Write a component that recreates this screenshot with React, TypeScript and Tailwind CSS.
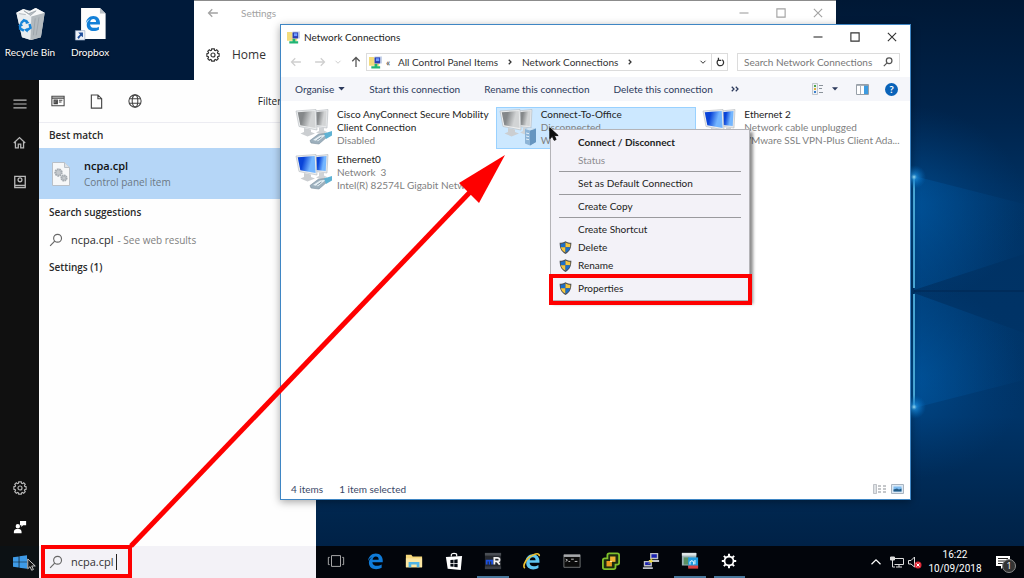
import type { ReactNode } from "react";
import clsx from "clsx";

type IconProps = { className?: string };

/* ---------- line icons ---------- */

function Stroke({ className, children, width = 1 }: IconProps & { children: ReactNode; width?: number }) {
  return (
    <svg
      viewBox="0 0 16 16"
      className={clsx("shrink-0", className)}
      fill="none"
      stroke="currentColor"
      strokeWidth={width}
      aria-hidden
    >
      {children}
    </svg>
  );
}

const MenuIcon = ({ className }: IconProps) => (
  <Stroke className={className} width={1.3}>
    <path d="M.5 3.500h15M.5 8h15M.5 12.500h15" />
  </Stroke>
);

const HomeIcon = ({ className }: IconProps) => (
  <Stroke className={className} width={1.6}>
    <path d="M1 8.500 8 2l7 6.500M3 7.500V14.500h3.500V10h3v4.500H13V7.500" />
  </Stroke>
);

const NotebookIcon = ({ className }: IconProps) => (
  <Stroke className={className} width={1.5}>
    <path d="M2 1.500h12v13H2zM2 12h12" />
    <circle cx="8" cy="5.500" r="2.200" />
  </Stroke>
);

const GearIcon = ({ className }: IconProps) => (
  <Stroke className={className} width={1.3}>
    <circle cx="8" cy="8" r="2.300" />
    <path d="M6.500 1h3l.3 1.600 1 .4L12.200 2 14 3.800l-.9 1.400.4 1 1.500.3v3l-1.500.3-.4 1 .9 1.400-1.800 1.800-1.400-.9-1 .4-.3 1.500h-3l-.3-1.500-1-.4-1.400.9L2 12.200l.9-1.400-.4-1L1 9.500v-3l1.500-.3.4-1L2 3.800 3.800 2l1.400 1 1-.4z" />
  </Stroke>
);

const SearchIcon = ({ className, width = 1.3 }: IconProps & { width?: number }) => (
  <Stroke className={className} width={width}>
    <circle cx="9.800" cy="6" r="4.500" />
    <path d="M6.500 9.300 1.300 14.700" />
  </Stroke>
);

const AppsIcon = ({ className }: IconProps) => (
  <Stroke className={className} width={1.2}>
    <path d="M1 2.500h14v11H1zM1 4.700h14M3.500 7h3.800v4H3.500zM9 7.200h4M9 9.200h3" />
    <circle cx="5.400" cy="9" r="1" />
  </Stroke>
);

const DocIcon = ({ className }: IconProps) => (
  <Stroke className={className} width={1.2}>
    <path d="M2.500 1h7l4 4v10h-11zM9.500 1v4h4" />
  </Stroke>
);

const GlobeIcon = ({ className }: IconProps) => (
  <Stroke className={className} width={1.200}>
    <circle cx="8" cy="8" r="7" />
    <ellipse cx="8" cy="8" rx="3.200" ry="7" />
    <path d="M1.500 5.500h13M1.500 10.500h13" />
  </Stroke>
);

const ArrowLeft = ({ className }: IconProps) => (
  <Stroke className={className} width={1.700}>
    <path d="M14.500 8H2M7 3 2 8l5 5" />
  </Stroke>
);

const ChevronDown = ({ className }: IconProps) => (
  <Stroke className={className} width={2}>
    <path d="m3 5.500 5 5 5-5" />
  </Stroke>
);

const ChevronRight = ({ className }: IconProps) => (
  <Stroke className={className} width={2.500}>
    <path d="m5.500 3.500 4.500 4.500-4.500 4.500" />
  </Stroke>
);

const RefreshIcon = ({ className }: IconProps) => (
  <Stroke className={className} width={2}>
    <path d="M11.500 4.500a5.200 5.200 0 1 1-6 .1M5.500 1v4.200H10" />
  </Stroke>
);

const Caret = ({ className }: IconProps) => (
  <svg viewBox="0 0 8 5" className={className} fill="currentColor" aria-hidden>
    <path d="M0 0h8L4 4.500z" />
  </svg>
);

const FeedbackIcon = ({ className }: IconProps) => (
  <svg viewBox="0 0 16 16" className={className} fill="currentColor" aria-hidden>
    <path d="M8 1h7v5h-3.500L9.500 8V6H8zM5.500 4.500a2.500 2.500 0 1 1 0 5 2.500 2.500 0 0 1 0-5zM1 15v-1.500C1 11 3 10 5.500 10s4.300 1 4.300 3.500V15z" />
  </svg>
);

const WindowsIcon = ({ className }: IconProps) => (
  <svg viewBox="0 0 16 16" className={className} fill="currentColor" aria-hidden>
    <path d="m0 2.500 6.500-.9v6H0zM7.300 1.500 16 .2v7.400H7.300zM0 8.400h6.500v6L0 13.500zM7.300 8.400H16v7.400l-8.700-1.300z" />
  </svg>
);

const Cursor = ({ className, fill, stroke }: IconProps & { fill: string; stroke: string }) => (
  <svg viewBox="0 0 12 18" className={className} aria-hidden>
    <path d="M1 1v13l3-2.800L6.200 16l2.300-1-2.200-4.700H11z" fill={fill} stroke={stroke} strokeWidth="1.200" />
  </svg>
);

/* ---------- colour icons ---------- */

function RecycleBin({ className }: IconProps) {
  return (
    <svg viewBox="0 0 32 36" className={className} aria-hidden>
      <path d="m1 6 7-4 8 2 6-3 9 5-4 26-10 3-10-3z" fill="#d5dadd" />
      <path d="m1 6 16 3-1 26-9-3z" fill="#e9edf0" />
      <path d="m17 9 14-3-4 26-11 3z" fill="#b3babf" />
      <path d="m1 6 8-4 5 3 7-4 10 5-14 4z" fill="#f7f8f9" />
      <path d="m9 4 5 3 8-3-6 5zM4 7l7 1M21 12l-2 18M25 11l-3 19" fill="#b6bec5" stroke="#959da3" strokeWidth=".7" />
      <g fill="none" stroke="#1684d8" strokeWidth="2.600">
        <path d="m6 17 3-3 4 2M15 18l1 4-4 3M9 25l-4-2v-4" />
      </g>
      <path d="m11 13 4 4-4 1zM13 22v5l-4-3zM3 20l3-4 2 4z" fill="#1684d8" />
    </svg>
  );
}

function EdgeMark() {
  return (
    <path d="M1 8.500C1.500 4 4.500.5 9 .5c4.700 0 7 3.500 7 7.300v1.700H5.500c.2 2.700 2.400 3.600 4.500 3.600 1.900 0 3.600-.5 4.900-1.300v3.300c-1.500.9-3.400 1.400-5.600 1.400-4.300 0-7.300-2.500-7.300-6.700 0-2.600 1.400-4.600 3.600-5.700C3.300 4.700 1.900 6.300 1 8.500zm4.700-1.700h6.200c0-2-1-3.200-2.900-3.200-1.800 0-3 1.300-3.300 3.200z" />
  );
}

function DropboxShortcut({ className }: IconProps) {
  return (
    <svg viewBox="0 0 34 36" className={className} aria-hidden>
      <path d="M7 1h20l6 6v27H7z" fill="#fdfdfd" />
      <path d="M27 1v6h6z" fill="#b9c0c6" />
      <g transform="translate(11 9)" fill="#1380d8">
        <EdgeMark />
      </g>
      <path d="M1 25h10v10H1z" fill="#eef2f8" stroke="#8aa0c0" strokeWidth=".6" />
      <path d="M4 27h5v5l-2-1.500L4.500 34 3 32l3-3z" fill="#1f4f9c" />
    </svg>
  );
}

function CplFile({ className }: IconProps) {
  return (
    <svg viewBox="0 0 18 24" className={className} aria-hidden>
      <path d="M.5.500h12l5 5v18H.5z" fill="#f6f7f8" stroke="#b9c0c8" />
      <path d="M12.500.500v5h5" fill="#dde1e5" stroke="#b9c0c8" />
      <g fill="#c4c8cc" stroke="#a4aab0">
        <circle cx="6.500" cy="10.500" r="3.200" strokeDasharray="1.600 .6" strokeWidth="2" />
        <circle cx="12" cy="16" r="2.600" strokeDasharray="1.500 .5" strokeWidth="2" />
      </g>
    </svg>
  );
}

function NetFolder({ className }: IconProps) {
  return (
    <svg viewBox="0 0 14 14" className={className} aria-hidden>
      <path d="M0 1h5l1 1h5v8.500H0z" fill="#f3dc7c" />
      <path d="M6 .5h8v7.500H6z" fill="#c7d3e8" />
      <path d="M6 1.500h6v6.500H6z" fill="#2a3fb4" />
      <path d="M7.500 2.500h3.500v3H7.500z" fill="#6f9bff" />
      <path d="M6 8.500h3V11h3v2.500H2.500V11H6z" fill="#21b573" />
    </svg>
  );
}

type Badge = "cable" | "server";

function ConnectionIcon({ active, badge, className }: IconProps & { active: boolean; badge: Badge }) {
  const from = active ? "#0a44d8" : "#85888a";
  const to = active ? "#74b6ff" : "#d2d4d5";
  const id = active ? "screen-on" : "screen-off";
  return (
    <svg viewBox="0 0 38 38" className={className} aria-hidden>
      <defs>
        <linearGradient id={id} x1="0" y1="0" x2="1" y2=".25">
          <stop offset=".35" stopColor={from} />
          <stop offset=".8" stopColor={to} />
        </linearGradient>
      </defs>
      <path d="m19 3 14-1.500L32 20l-12-1.500z" fill="#e6e8ea" stroke="#b4b9bd" strokeWidth=".6" />
      <path d="m20.500 4.200 11-1.200-.8 15-9.700-1z" fill={`url(#${id})`} />
      <path d="m24 19.500 5 .5v2.500l3 1.500-6 2.500-5-2 3-1.500z" fill="#d0d3d6" />
      <path d="m1 3 20-1.500L22 22 4 18.500z" fill="#eceeef" stroke="#b4b9bd" strokeWidth=".6" />
      <path d="m2.700 4.300 17-1.300.9 17L5.300 17.200z" fill={`url(#${id})`} />
      <path d="m9 20 7 1.500V24l4 1.500-7.500 3-7-3L9 24z" fill="#cbced1" />
      {badge === "cable" ? (
        <g>
          <path d="m15 32.500 8-6 9-1.500v4l-8 7-8-1z" fill="#9db0bd" stroke="#7b8f9d" strokeWidth=".6" />
          <path d="m18 32 7-4.500 6-.8-8 6.600z" fill="#e6eff4" />
          <path d="m21.500 32.500 5-3.500" stroke="#7f95a4" />
          <path d="m29 25.500 8-2.500v4.500L31 31z" fill="#5fb2d3" />
        </g>
      ) : (
        <g>
          <path d="m26 21 4-1.500 7 1V34l-6 3.500-5-2z" fill="#8db4d6" />
          <path d="m31 22.500 6-2V34l-6 3.500z" fill="#6595c0" />
          <path d="m26 21 4-1.500 7 1-6 2z" fill="#cfe3f3" />
          <path d="m27 25 3 .7M27 28l3 .7M27 31l3 .7" stroke="#e4f1fb" />
        </g>
      )}
    </svg>
  );
}

function Shield({ className }: IconProps) {
  return (
    <svg viewBox="0 0 14 14" className={className} aria-hidden>
      <path d="M7 .2c2 1.300 4 1.700 6.300 1.700C13.300 7.500 11.800 11.200 7 13.900 2.200 11.200.7 7.500.7 1.900 3 1.900 5 1.500 7 .2z" fill="#4a4f55" />
      <path d="M7 1.600v5.200H2C1.800 5.400 1.800 4.300 1.900 3 3.700 3 5.400 2.600 7 1.600z" fill="#1c6fc9" />
      <path d="M7 1.600v5.200h5c.2-1.400.2-2.500.1-3.800C10.300 3 8.600 2.600 7 1.600z" fill="#f6c63c" />
      <path d="M2 6.800h5v5.700C4 10.900 2.500 9.200 2 6.800z" fill="#f6c63c" />
      <path d="M12 6.800H7v5.700c3-1.600 4.500-3.300 5-5.700z" fill="#1c6fc9" />
    </svg>
  );
}

/* ---------- wallpaper ---------- */

function Wallpaper() {
  return (
    <svg className="absolute inset-0 h-full w-full" viewBox="0 0 1024 578" preserveAspectRatio="none" aria-hidden>
      <defs>
        <linearGradient id="sky" x1="0" y1="0" x2="0" y2="1">
          <stop offset="0" stopColor="#001835" />
          <stop offset=".2" stopColor="#00244c" />
          <stop offset=".35" stopColor="#003264" />
          <stop offset=".72" stopColor="#003468" />
          <stop offset=".9" stopColor="#00254c" />
          <stop offset="1" stopColor="#001d40" />
        </linearGradient>
        <radialGradient id="glow">
          <stop offset="0" stopColor="#0062b3" stopOpacity=".5" />
          <stop offset="1" stopColor="#004a90" stopOpacity="0" />
        </radialGradient>
        <radialGradient id="spark">
          <stop offset="0" stopColor="#a5e8ff" />
          <stop offset=".25" stopColor="#1e95e8" stopOpacity=".7" />
          <stop offset="1" stopColor="#0068bd" stopOpacity="0" />
        </radialGradient>
        <linearGradient id="beam" x1="0" x2="1">
          <stop offset="0" stopColor="#0060b0" stopOpacity=".35" />
          <stop offset="1" stopColor="#0060b0" stopOpacity=".03" />
        </linearGradient>
      </defs>
      <rect width="1024" height="578" fill="url(#sky)" />
      <path d="M0 0h194v80H0z" fill="#001a3a" />
      <ellipse cx="905" cy="205" rx="120" ry="100" fill="url(#glow)" />
      <ellipse cx="905" cy="380" rx="120" ry="100" fill="url(#glow)" />
      <path d="m914 176 110 28v50l-110 36z" fill="url(#beam)" />
      <path d="m914 293 110 40v47l-110 28z" fill="url(#beam)" />
      <path d="M914 290h110v2H914z" fill="#00244c" opacity=".4" />
      <path d="M913 176h2v112h-2zM913 294h2v114h-2z" fill="#4fb4e6" />
      <circle cx="914" cy="177" r="12" fill="url(#spark)" />
      <circle cx="914" cy="407" r="12" fill="url(#spark)" />
    </svg>
  );
}

function DesktopIcon({ label, children }: { label: string; children: ReactNode }) {
  return (
    <button className="flex w-15 flex-col items-center gap-[3px] font-['Lato',sans-serif] text-[10px] leading-4 whitespace-nowrap text-white [text-shadow:0_1px_2px_#000]">
      {children}
      {label}
    </button>
  );
}

/* ---------- windows ---------- */

function WindowButtons({ className }: IconProps) {
  return (
    <div className={clsx("flex items-center", className)}>
      <button aria-label="Minimise" className="flex w-[37px] justify-center">
        <Stroke className="size-3" width={1.500}><path d="M2 8h12" /></Stroke>
      </button>
      <button aria-label="Maximise" className="flex w-[37px] justify-center">
        <Stroke className="size-3" width={1.500}><path d="M2.500 2.500h11v11h-11z" /></Stroke>
      </button>
      <button aria-label="Close" className="flex w-[37px] justify-center">
        <Stroke className="size-3" width={1.500}><path d="m2.500 2.500 11 11M13.500 2.500l-11 11" /></Stroke>
      </button>
    </div>
  );
}

function SettingsWindow() {
  return (
    <section className="absolute top-0 right-[188px] left-[194px] h-[500px] border-t border-[#8c8c8c] bg-white">
      <div className="flex h-6 items-center text-[#a3a3a3]">
        <button aria-label="Back" className="ml-[13px]"><ArrowLeft className="size-3" /></button>
        <span className="ml-[22px] flex-1 font-['Lato',sans-serif] text-[10px]">Settings</span>
        <WindowButtons />
      </div>
      <button className="mt-5 ml-3 flex items-center gap-3 text-[12px] leading-5 text-[#333]">
        <GearIcon className="size-[14px]" />
        Home
      </button>
    </section>
  );
}

function StartPanel() {
  return (
    <section className="absolute top-20 bottom-0 left-0 flex w-[316px] bg-[#fefefe] text-[#2a2a2a]">
      <nav className="flex w-[39px] flex-col items-center bg-[#101010] pt-1 text-[#b8b8b8]">
        <button aria-label="Expand" className="h-[39px]"><MenuIcon className="size-[14px]" /></button>
        <button aria-label="Home" className="h-[39px]"><HomeIcon className="size-[13px]" /></button>
        <button aria-label="Notebook" className="h-[39px]"><NotebookIcon className="size-[14px]" /></button>
        <button aria-label="Settings" className="mt-auto h-[39px]"><GearIcon className="size-[14px]" /></button>
        <button aria-label="Feedback" className="h-[39px] text-white"><FeedbackIcon className="size-[14px]" /></button>
      </nav>
      <div className="min-w-0 flex-1">
        <div className="flex h-[43px] items-center gap-6 border-b border-[#ececf2] px-3 text-[#444]">
          <button aria-label="Apps"><AppsIcon className="size-[14px]" /></button>
          <button aria-label="Documents"><DocIcon className="size-[15px]" /></button>
          <button aria-label="Web"><GlobeIcon className="size-[14px]" /></button>
          <button className="ml-auto flex items-center gap-2 text-[10px] text-[#222]">
            Filters <ChevronDown className="size-[10px]" />
          </button>
        </div>
        <h2 className="px-[10px] text-[10px] leading-[25px] font-semibold">Best match</h2>
        <button className="flex h-[51px] w-full items-center gap-[14px] bg-[#b5d6f7] px-[13px] text-left">
          <CplFile className="h-6 w-[18px]" />
          <span>
            <span className="block text-[11px] leading-[17px] font-semibold text-[#111]">ncpa.cpl</span>
            <span className="block text-[10px] leading-[17px] text-[#6b7885]">Control panel item</span>
          </span>
        </button>
        <h2 className="px-[10px] text-[10px] leading-[27px] font-semibold">Search suggestions</h2>
        <button className="flex h-7 items-center px-[10px] text-[11px]">
          <SearchIcon className="size-[14px] text-[#666]" />
          <span className="ml-2">ncpa.cpl</span>
          <span className="ml-1 text-[10px] text-[#808080]">- See web results</span>
        </button>
        <h2 className="px-[10px] text-[10px] leading-[27px] font-semibold">Settings (1)</h2>
      </div>
    </section>
  );
}

type Connection = {
  name: string;
  lines: string[];
  active: boolean;
  badge: Badge;
  selected?: boolean;
};

const CONNECTIONS: Connection[] = [
  { name: "Cisco AnyConnect Secure Mobility Client Connection", lines: ["Disabled"], active: false, badge: "cable" },
  { name: "Connect-To-Office", lines: ["Disconnected", "W"], active: false, badge: "server", selected: true },
  { name: "Ethernet 2", lines: ["Network cable unplugged", "VMware SSL VPN-Plus Client Ada..."], active: true, badge: "cable" },
  { name: "Ethernet0", lines: ["Network  3", "Intel(R) 82574L Gigabit Netwo..."], active: true, badge: "cable" },
];

function ConnectionTile({ item }: { item: Connection }) {
  return (
    <button
      className={clsx(
        "flex h-[42px] min-w-0 gap-1 border text-left leading-[13px]",
        item.selected ? "border-[#99d1ff] bg-[#cce8ff]" : "border-transparent",
      )}
    >
      <ConnectionIcon active={item.active} badge={item.badge} className="ml-[2px] size-[38px] shrink-0" />
      <span className="min-w-0 flex-1">
        <span className="block text-[#222]">{item.name}</span>
        {item.lines.map((line) => (
          <span key={line} className="block whitespace-pre text-[#808080]">{line}</span>
        ))}
      </span>
    </button>
  );
}

function NetworkWindow() {
  return (
    <section className="absolute top-6 right-[113px] bottom-[46px] left-[280px] flex flex-col border border-[#3f86c4] bg-white font-['Lato',sans-serif] text-[10px] text-[#333] shadow-[0_2px_8px_rgba(0,0,0,0.35)]">
      <header className="flex h-6 items-center pl-[6px]">
        <NetFolder className="size-[13px]" />
        <h1 className="ml-1 flex-1 text-[#222]">Network Connections</h1>
        <WindowButtons className="text-[#333]" />
      </header>

      <div className="mt-1 flex h-[18px] items-center pr-[10px] pl-[9px]">
        <button aria-label="Back" className="text-[#cfcfcf]"><ArrowLeft className="size-3" /></button>
        <button aria-label="Forward" className="ml-3 rotate-180 text-[#cfcfcf]"><ArrowLeft className="size-3" /></button>
        <button aria-label="Recent locations" className="ml-2 text-[#cfcfcf]"><ChevronDown className="size-2" /></button>
        <button aria-label="Up" className="ml-2 rotate-90 text-[#555]"><ArrowLeft className="size-3" /></button>
        <div className="ml-1 flex h-[18px] flex-1 items-center border border-[#dcdcdc] pl-[2px] whitespace-nowrap">
          <NetFolder className="size-[13px]" />
          <span className="ml-1 w-3">«</span>
          <button className="mr-1">All Control Panel Items</button>
          <ChevronRight className="mx-1 size-2" />
          <button className="mx-1">Network Connections</button>
          <ChevronRight className="mx-1 size-2" />
          <button aria-label="Previous locations" className="mr-1 ml-auto"><ChevronDown className="size-2" /></button>
          <button aria-label="Refresh" className="flex h-full w-4 items-center justify-center border-l border-[#dcdcdc]">
            <RefreshIcon className="size-[10px]" />
          </button>
        </div>
        <label className="ml-[9px] flex h-[18px] w-[163px] items-center border border-[#dcdcdc] pr-[6px] pl-[6px] text-[#555]">
          <input
            aria-label="Search Network Connections"
            placeholder="Search Network Connections"
            className="min-w-0 flex-1 bg-transparent outline-none placeholder:text-[#777]"
          />
          <SearchIcon className="size-[10px]" width={2} />
        </label>
      </div>

      <div className="mt-[6px] flex h-6 items-center bg-[#f5f6fa] pr-3 pl-[14px] whitespace-nowrap text-[#2c3a5c]">
        <button className="flex items-center gap-1">
          Organise <Caret className="h-[4px] w-[7px]" />
        </button>
        <button className="ml-6">Start this connection</button>
        <button className="ml-6">Rename this connection</button>
        <button className="ml-6">Delete this connection</button>
        <button aria-label="More" className="ml-4 flex">
          <ChevronRight className="size-2" />
          <ChevronRight className="-ml-1 size-2" />
        </button>
        <button aria-label="View" className="ml-auto flex items-center gap-2">
          <svg viewBox="0 0 12 12" className="size-3">
            <path d="M.5.500h5v11h-5z" fill="#eef1f4" stroke="#b5bbc2" strokeWidth=".8" />
            <path d="M2 2h2v2H2z" fill="#4da34d" />
            <path d="M2 5h2v2H2z" fill="#e0b040" />
            <path d="M2 8h2v2H2z" fill="#3b7fcc" />
            <path d="M7 2.500h4M7 5.500h3M7 9.500h4" stroke="#8a929a" />
          </svg>
          <Caret className="h-[4px] w-[6px]" />
        </button>
        <button aria-label="Preview pane" className="ml-[18px]">
          <svg viewBox="0 0 13 11" className="h-[11px] w-[13px]">
            <path d="M.5.500h12v10H.5z" fill="#fff" stroke="#98a0a8" />
            <path d="M8 1h4v9H8z" fill="#3d9be0" />
            <path d="M.5 1.500h12M4.500 2v8" stroke="#98a0a8" strokeWidth=".8" />
          </svg>
        </button>
        <button aria-label="Help" className="ml-4 size-[13px] rounded-full bg-[#0a63b8] text-[10px] leading-[13px] font-bold text-white">
          ?
        </button>
      </div>

      <div className="grid flex-1 grid-cols-3 content-start gap-[3px] pt-[6px] pr-[10px] pl-[11px]">
        {CONNECTIONS.map((item) => (
          <ConnectionTile key={item.name} item={item} />
        ))}
      </div>

      <footer className="flex h-5 items-center gap-4 pr-[6px] pl-[10px] text-[#3a4868]">
        <span>4 items</span>
        <span>1 item selected</span>
        <div className="ml-auto flex gap-1">
          <button aria-label="Details view">
            <svg viewBox="0 0 14 10" className="h-[10px] w-[14px]">
              <path d="M.5.500h3v9h-3z" fill="#dfe2e5" stroke="#a9aeb4" strokeWidth=".7" />
              <path d="M5 2h3M5 5h3M5 8h3M10 2h3M10 5h3M10 8h3" stroke="#8a8f95" />
            </svg>
          </button>
          <button aria-label="Large icons view">
            <svg viewBox="0 0 13 10" className="h-[10px] w-[13px]">
              <path d="M.5.500h12v9H.5z" fill="#dce9f5" stroke="#a9b4c0" />
              <path d="M2.500 2.500h8v5h-8z" fill="#7fbcf0" />
              <path d="M2.500 5.500 6 4.500l2 1 2.500-1v3h-8z" fill="#245c86" />
            </svg>
          </button>
        </div>
      </footer>
    </section>
  );
}

type MenuEntry = { label: string; shield?: boolean; bold?: boolean; disabled?: boolean };

const MENU_GROUPS: MenuEntry[][] = [
  [
    { label: "Connect / Disconnect", bold: true },
    { label: "Status", disabled: true },
  ],
  [{ label: "Set as Default Connection" }],
  [{ label: "Create Copy" }],
  [{ label: "Create Shortcut" }, { label: "Delete", shield: true }, { label: "Rename", shield: true }],
  [{ label: "Properties", shield: true }],
];

function ContextMenu() {
  return (
    <div
      role="menu"
      className="absolute top-[129px] left-[550px] w-[200px] border border-[#b4b4b8] bg-[#f3f2f8] py-[3px] font-['Lato',sans-serif] text-[10px] text-[#222] shadow-[3px_3px_3px_rgba(0,0,0,0.45)]"
    >
      {MENU_GROUPS.map((group, i) => (
        <div key={group[0].label}>
          {i > 0 && <hr className="mx-2 my-[2px] border-t border-[#9a9a9e]" />}
          {group.map((entry) => (
            <button
              key={entry.label}
              role="menuitem"
              disabled={entry.disabled}
              className={clsx(
                "flex h-[18px] w-full items-center gap-[6px] pl-2",
                entry.bold && "font-bold",
                entry.disabled && "text-[#8c8c90]",
              )}
            >
              <span className="size-[13px]">{entry.shield && <Shield className="size-[13px]" />}</span>
              {entry.label}
            </button>
          ))}
        </div>
      ))}
    </div>
  );
}

/* ---------- taskbar ---------- */

const TASKS: { label: string; running?: boolean; art: ReactNode }[] = [
  {
    label: "Task view",
    art: <path d="M5 4h10v12H5zM3 6H1.500v8H3M17 6h1.500v8H17" fill="none" stroke="#b8b8b8" />,
  },
  {
    label: "Edge",
    art: <g transform="translate(1 1) scale(1.100)" fill="#0f7bd8"><EdgeMark /></g>,
  },
  {
    label: "File Explorer",
    art: (
      <>
        <path d="M1 3h6l1.500 2H19v12H1z" fill="#f5d77b" />
        <path d="M1 7h18v10H1z" fill="#fbe7a3" />
        <path d="M4 17v-6h12v6h-3v-3H7v3z" fill="#4fb4e6" />
      </>
    ),
  },
  {
    label: "Store",
    art: (
      <>
        <path d="M7 5V3c0-2 6-2 6 0v2" fill="none" stroke="#fff" strokeWidth="1.300" />
        <path d="m1 5.500 18-1L17.500 20 3 18.500z" fill="#fff" />
        <path d="m6 9 3.500-.4v3.600H6zM10.300 8.500 14 8v4.200h-3.700zM6 13h3.500v3.500L6 16zM10.300 13H14v4l-3.700-.4z" fill="#050a12" />
      </>
    ),
  },
  {
    label: "mRemote",
    running: true,
    art: (
      <>
        <path d="M1 1h18v18H1z" fill="#25282e" />
        <path d="M1 1h18v3H1z" fill="#4a4e55" />
        <path d="M1 16h18v3H1z" fill="#3b3e45" />
        <path d="M3 14V9.500h6V14" fill="none" stroke="#1c50e0" strokeWidth="2" />
        <path d="M6 10v4" stroke="#1c50e0" strokeWidth="1.500" />
        <path d="M11.500 14V6.500H15c3 0 3 4 0 4h-3M14.500 10.500 17.500 14" fill="none" stroke="#f0f0f0" strokeWidth="2" />
      </>
    ),
  },
  {
    label: "Internet Explorer",
    art: (
      <>
        <g transform="translate(1.500 2) scale(1.050)" fill="#5fc6f2"><EdgeMark /></g>
        <path d="M2 18C-1 15 4 6 12 3c4-1.800 6.500-1 6 1.500" fill="none" stroke="#f0c230" strokeWidth="1.800" />
      </>
    ),
  },
  {
    label: "Command Prompt",
    art: (
      <>
        <path d="M1 3h18v14H1z" fill="#0b0b0b" stroke="#77797c" />
        <path d="M1 3h18v2.500H1z" fill="#a6a8ab" />
        <path d="m3 8 2 1-2 1.500M6 10.500h2M9 8h3M13 10.500h3" stroke="#cfcfcf" fill="none" />
      </>
    ),
  },
  {
    label: "vSphere",
    art: (
      <>
        <path d="M8 1.500h9q2 0 2 2V12q0 2-2 2h-2v3q0 2-2 2H3q-2 0-2-2V9q0-2 2-2h3V3.500q0-2 2-2z" fill="#1c2a10" stroke="#7fc02c" strokeWidth="2" />
        <path d="M9 5h6v6H9z" fill="#f0b435" />
        <path d="M5 10h6v6H5z" fill="#e89a20" />
        <path d="M9 10h2v1H9z" fill="#fff0b0" />
      </>
    ),
  },
  {
    label: "PuTTY",
    art: (
      <>
        <path d="M9 1h9v7H9zM8 9h11v2H8zM2 10h9v6H2zM1 17h11v2H1z" fill="#bfc1c8" />
        <path d="M10.500 2.500h6v4h-6zM3.500 11.500h6v3h-6z" fill="#1b22b0" />
        <path d="m13 6-6 4 3 .5L6 14l7-4-3-.5z" fill="#f6e21c" />
      </>
    ),
  },
  {
    label: "Control Panel",
    running: true,
    art: (
      <>
        <path d="M1 1h16v14H1z" fill="#9fb4b8" />
        <path d="M1 1h16v3H1z" fill="#dfe6e8" />
        <path d="M3 6h6v8H3z" fill="#5a8f62" />
        <path d="M8 6h11v11H8z" fill="#1e9be0" />
        <path d="M8 15h11v3.500H8z" fill="#d84040" />
        <path d="M10 14v-3l2-1.500 2 1.500v3M15.500 9v4.500" stroke="#d8f2ff" fill="none" strokeWidth="1.200" />
      </>
    ),
  },
  {
    label: "Settings",
    running: true,
    art: (
      <g stroke="#fff" fill="none">
        <circle cx="10" cy="10" r="5" strokeWidth="2" />
        <path d="M10 2v3M10 15v3M2 10h3M15 10h3M4.300 4.300l2.200 2.200M13.500 13.500l2.200 2.200M15.700 4.300l-2.200 2.200M6.500 13.500l-2.200 2.200" strokeWidth="2.200" />
      </g>
    ),
  },
];

function Taskbar() {
  return (
    <footer className="relative flex h-8 items-stretch bg-[#02050b] text-white">
      <button aria-label="Start" className="flex w-[39px] items-center justify-center bg-[#0c1114] text-[#3e9ae6]">
        <WindowsIcon className="size-[14px]" />
      </button>
      <label className="flex w-[277px] items-center bg-[#f3f2f7] pl-[10px] text-[#333]">
        <SearchIcon className="size-[14px] text-[#666]" />
        <input
          aria-label="Search"
          defaultValue="ncpa.cpl"
          className="ml-2 w-[45px] bg-transparent text-[11px] outline-none"
        />
        <span className="h-4 w-px bg-[#222]" />
      </label>
      <div className="grid w-[433px] grid-cols-11">
        {TASKS.map(({ label, running, art }) => (
          <button
            key={label}
            aria-label={label}
            className={clsx(
              "mx-1 flex items-center justify-center border-b-2",
              running ? "border-[#49789c]" : "border-transparent",
            )}
          >
            <svg viewBox="0 0 20 20" className="size-[18px]" aria-hidden>{art}</svg>
          </button>
        ))}
      </div>
      <div className="ml-auto flex items-center gap-1 pr-1">
        <button aria-label="Show hidden icons" className="mr-1">
          <Stroke className="size-3"><path d="m2 11 6-6 6 6" strokeWidth="1.600" /></Stroke>
        </button>
        <button aria-label="Network">
          <svg viewBox="0 0 14 12" className="h-3 w-[14px]" fill="none" stroke="#ddd">
            <path d="M4.500 2.500h9v6h-9M9 8.500v2.500M6 11h6M2.500 4v7H5" />
            <path d="M.5 1h4v3h-4z" fill="#ddd" />
          </svg>
        </button>
        <button aria-label="Volume muted">
          <svg viewBox="0 0 14 13" className="h-[13px] w-[14px]">
            <path d="M.5 4.500H3L6.500 1v10L3 8H.5z" fill="none" stroke="#ddd" />
            <circle cx="10" cy="9" r="3.500" fill="#e02c3a" />
            <path d="m8.500 7.500 3 3M11.500 7.500l-3 3" stroke="#fff" />
          </svg>
        </button>
        <time className="w-[58px] text-center font-['Roboto',sans-serif] text-[10px] leading-[14px] whitespace-nowrap">
          16:22
          <br />
          10/09/2018
        </time>
        <button aria-label="1 notification" className="relative ml-2 w-6">
          <svg viewBox="0 0 14 14" className="size-[14px]">
            <path d="M0 1h14v10H8l-3 3v-3H0z" fill="#fff" />
            <path d="M2 3.500h10M2 6h10M2 8.500h7" stroke="#222" />
          </svg>
          <span className="absolute top-1 left-[6px] size-[14px] rounded-full border border-[#8b8b8b] bg-[#333] text-[9px] leading-3">
            1
          </span>
        </button>
      </div>
    </footer>
  );
}

/* ---------- red callouts ---------- */

function Callouts() {
  return (
    <>
      <svg className="pointer-events-none absolute top-0 left-0" width="520" height="578" aria-hidden>
        <path d="M131 546 472 190" stroke="#fe0000" strokeWidth="5" />
        <path d="m505 155-46 28 20 20z" fill="#fe0000" />
      </svg>
      <div className="pointer-events-none absolute bottom-0 left-[41px] h-[33px] w-[91px] border-4 border-[#fe0000]" />
      <div className="pointer-events-none absolute top-[274px] left-[549px] h-[31px] w-[203px] border-4 border-[#fe0000]" />
    </>
  );
}

export default function App() {
  return (
    <main className="relative flex h-screen flex-col overflow-hidden bg-[#001733] font-['Open_Sans','Noto_Sans',sans-serif]">
      <Wallpaper />
      <div className="relative flex-1">
        <div className="flex pt-[7px]">
          <DesktopIcon label="Recycle Bin"><RecycleBin className="h-[34px] w-[31px]" /></DesktopIcon>
          <DesktopIcon label="Dropbox"><DropboxShortcut className="h-[34px] w-[33px]" /></DesktopIcon>
        </div>
        <SettingsWindow />
        <StartPanel />
        <NetworkWindow />
        <ContextMenu />
        <Cursor className="absolute top-[127px] left-[549px] h-[15px] w-[10px]" fill="#111" stroke="#111" />
      </div>
      <Taskbar />
      <Cursor className="absolute bottom-[6px] left-[27px] h-[14px] w-[9px]" fill="#111" stroke="#ddd" />
      <Callouts />
    </main>
  );
}
